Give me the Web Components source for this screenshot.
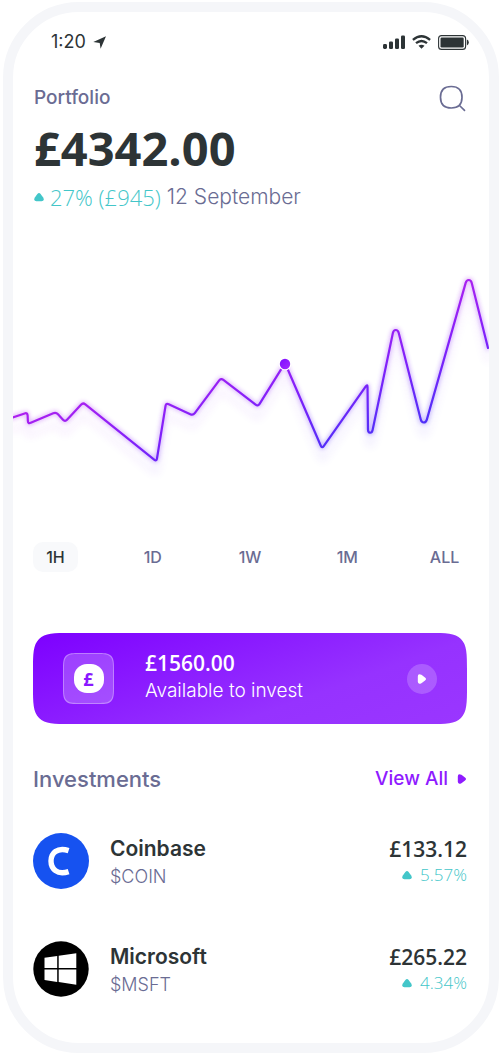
<!DOCTYPE html>
<html lang="en">
<head>
<meta charset="utf-8">
<meta name="viewport" content="width=device-width, initial-scale=1">
<title>Portfolio</title>
<style>
  :root {
    --ink: #2d3436;
    --muted: #6a6c93;
    --teal: #43c6c9;
    --violet: #8f1bff;
    --frame: #f5f6f9;
    --figures: "Open Sans", "Noto Sans", sans-serif;
  }
  body { margin: 0; background: #fff; color: var(--ink); font-family: Inter, "Open Sans", sans-serif; }
</style>
</head>
<body>
<portfolio-app></portfolio-app>

<script>
const base = `<style>
  *, *::before { box-sizing: border-box; }
  :host { display: block; }
  svg { display: block; flex: none; }
  button { font: inherit; color: inherit; border: 0; background: none; padding: 0; margin: 0; cursor: pointer; }
  a { color: inherit; text-decoration: none; }
</style>`;

function define(name, html, ready) {
  const template = document.createElement('template');
  template.innerHTML = base + html;
  customElements.define(name, class extends HTMLElement {
    constructor() {
      super();
      this.attachShadow({ mode: 'open' }).append(template.content.cloneNode(true));
    }
    connectedCallback() { if (ready) ready(this, this.shadowRoot); }
  });
}

/* Small triangle with rounded corners, pointing up or right */
define('trend-mark', `
<style>
  :host { display: inline-block; flex: none; }
  :host([right]) svg { transform: rotate(90deg); }
</style>
<svg width="10" height="10" viewBox="0 0 10 10" aria-hidden="true"><path d="M3.4 2Q5 0 6.6 2L9.2 5.6Q10.8 9.2 7.6 9.2H2.4Q-.8 9.2 .8 5.6Z" fill="currentColor"/></svg>`);

define('status-bar', `
<style>
  :host { display: flex; align-items: center; justify-content: space-between; height: 60px; padding: 0 20px 0 38px; }
  .side { display: flex; align-items: center; gap: 7px; font-size: 18px; line-height: 24px; }
</style>
<div class="side"><time>1:20</time>
  <svg width="13" height="13" viewBox="0 0 13 13" aria-hidden="true"><path d="M13 .3 7.6 12.7 6.7 7 .3 6Z" fill="currentColor"/></svg>
</div>
<div class="side">
  <svg width="22" height="14" viewBox="0 0 22 14" fill="currentColor" aria-hidden="true"><rect y="9" width="4" height="5" rx="1.4"/><rect x="6" y="6.5" width="4" height="7.5" rx="1.2"/><rect x="12" y="3.5" width="4" height="10.5" rx="1.2"/><rect x="18" y=".5" width="4" height="13.5" rx="1.2"/></svg>
  <svg width="19" height="14" viewBox="0 0 19 14" fill="none" stroke="currentColor" stroke-width="2.3" aria-hidden="true"><path d="M.9 4.8Q9.5-2.2 18.1 4.8M4 8.2Q9.5 3.7 15 8.2"/><path d="M6.5 10.8Q9.5 8.9 12.5 10.8L9.5 13.8Z" fill="currentColor" stroke="none"/></svg>
  <svg width="31" height="15" viewBox="0 0 31 15" aria-hidden="true"><rect x=".6" y=".6" width="27" height="13.8" rx="3" fill="none" stroke="currentColor" stroke-width="1.1"/><rect x="2.5" y="2.5" width="23.2" height="10" rx="1.2" fill="currentColor"/><path d="M28.9 4.6Q30.8 5.2 30.8 7.5T28.9 10.4Z" fill="currentColor"/></svg>
</div>`);

define('portfolio-summary', `
<style>
  :host { padding: 12px 23px 0 21px; }
  header { display: flex; align-items: center; justify-content: space-between; height: 28px; color: var(--muted); }
  h1 { margin: 0; font-size: 19px; line-height: 24px; font-weight: 500; }
  .total { margin: 8px 0 9px; font-family: var(--figures); font-size: 47px; line-height: 56px; font-weight: 700; }
  .change { display: flex; align-items: center; gap: 6px; margin: 0; font-size: 21px; line-height: 24px; font-weight: 300; color: var(--muted); white-space: nowrap; }
  .change span { color: var(--teal); font-family: var(--figures); font-size: 22px; }
  trend-mark { color: var(--teal); }
</style>
<header><h1>Portfolio</h1>
  <button aria-label="Search"><svg width="27" height="27" viewBox="0 0 27 27" fill="none" stroke="currentColor" stroke-width="1.7" stroke-linecap="round"><path d="M12.3 1.5C19.7 1.5 23 4.9 23 12.3S19.7 23 12.3 23 1.5 19.7 1.5 12.3 4.9 1.5 12.3 1.5ZM20.5 20.5 25.5 25.3"/></svg></button>
</header>
<p class="total">£4342.00</p>
<p class="change"><trend-mark></trend-mark><span>27% (£945)</span> 12 September</p>`);

define('price-chart', `
<style>
  svg { width: 100%; height: auto; }
</style>
<svg viewBox="0 0 476 260" role="img" aria-label="Portfolio value over the last hour">
  <defs>
    <linearGradient id="line" gradientUnits="userSpaceOnUse" x1="0" y1="177" x2="38" y2="301"><stop offset="0" stop-color="#ab20f0"/><stop offset=".45" stop-color="#8220fa"/><stop offset="1" stop-color="#4d30f8"/></linearGradient>
    <linearGradient id="dot" x1="0" y1="0" x2="1" y2="1"><stop offset="0" stop-color="#7c0cff"/><stop offset="1" stop-color="#a52cff"/></linearGradient>
    <filter id="glow" filterUnits="userSpaceOnUse" x="-20" y="0" width="516" height="260"><feGaussianBlur stdDeviation="2"/></filter>
    <filter id="shade" filterUnits="userSpaceOnUse" x="-20" y="0" width="516" height="280"><feGaussianBlur stdDeviation="4"/></filter>
  </defs>
  <g fill="none" stroke="url(#line)" stroke-linejoin="round" stroke-linecap="round">
    <path stroke-width="5" opacity=".07" transform="translate(0 12)" filter="url(#shade)"/>
    <path stroke-width="4" opacity=".34" filter="url(#glow)"/>
    <path stroke-width="2.2"/>
  </g>
  <circle cx="272" cy="124" r="6.5" fill="#fff"/>
  <circle cx="272" cy="124" r="5.2" fill="url(#dot)"/>
</svg>`, (host, root) => {
  const points = [[-2,178],[14.5,172.5],[15,184],[43,172],[52,182],[70,162.5],[143.5,221.5],[153,163],[180,175.5],[208,138],[245,166.5],[272,123],[309,208.5],[354.5,144],[355,192.5],[359,193],[380.5,90],[385,90],[408.5,182.5],[413,182.5],[453.5,40],[458,40],[475,108]];
  const toward = (a, b, d) => {
    const k = d / Math.hypot(b[0] - a[0], b[1] - a[1]);
    return [a[0] + (b[0] - a[0]) * Math.min(k, .5), a[1] + (b[1] - a[1]) * Math.min(k, .5)];
  };
  let d = 'M' + points[0];
  for (let i = 1; i < points.length - 1; i++) {
    d += 'L' + toward(points[i], points[i - 1], 3) + 'Q' + points[i] + ' ' + toward(points[i], points[i + 1], 3);
  }
  d += 'L' + points.at(-1);
  root.querySelectorAll('g path').forEach(p => p.setAttribute('d', d));
});

define('range-picker', `
<style>
  :host { display: flex; justify-content: space-between; padding: 42px 22px 0 20px; color: var(--muted); }
  button { width: 45px; height: 30px; border-radius: 10px; font-size: 16px; line-height: 20px; font-weight: 500; }
  button[aria-pressed=true] { background: #f8f9fb; color: var(--ink); }
</style>
<button aria-pressed="true">1H</button><button aria-pressed="false">1D</button><button aria-pressed="false">1W</button><button aria-pressed="false">1M</button><button aria-pressed="false">ALL</button>`,
(host, root) => root.addEventListener('click', e => {
  const hit = e.target.closest('button');
  if (hit) root.querySelectorAll('button').forEach(b => b.setAttribute('aria-pressed', b === hit));
}));

define('invest-card', `
<style>
  :host { margin: 61px 22px 0 20px; }
  section { display: flex; align-items: center; padding: 16px 30px; border-radius: 26px; color: #fff; background: linear-gradient(160deg, #7d00ff 0%, #9632ff 66%, #9a36ff 100%); }
  .tile { display: grid; place-items: center; width: 51px; height: 51px; border: 1px solid #ffffff50; border-radius: 13px; background: #ffffff38; }
  .coin { display: grid; place-items: center; width: 30px; height: 29px; border-radius: 13px; background: #fff; color: #8a18ff; font-family: var(--figures); font-size: 18px; line-height: 24px; font-weight: 700; }
  .text { flex: 1; margin-left: 31px; padding-bottom: 3px; }
  p { margin: 0; }
  .sum { font-family: var(--figures); font-size: 21px; line-height: 28px; font-weight: 600; }
  .note { font-size: 19px; line-height: 28px; font-weight: 300; }
  button { display: grid; place-items: center; width: 30px; height: 30px; border-radius: 50%; background: #ffffff33; }
  @supports (corner-shape: squircle) {
    section { border-radius: 38px; corner-shape: squircle; }
    .tile { border-radius: 18px; corner-shape: squircle; }
  }
</style>
<section>
  <div class="tile"><div class="coin">£</div></div>
  <div class="text"><p class="sum">£1560.00</p><p class="note">Available to invest</p></div>
  <button aria-label="Invest"><trend-mark right></trend-mark></button>
</section>`);

define('holding-row', `
<style>
  :host { display: flex; align-items: center; height: 56px; }
  ::slotted(svg) { display: block; flex: none; }
  p { margin: 0; }
  .name { flex: 1; margin-left: 21px; padding-top: 4px; }
  .value { text-align: right; font-family: var(--figures); padding-top: 4px; }
  .main { font-size: 21px; line-height: 28px; font-weight: 600; }
  .sub { font-size: 18px; line-height: 28px; font-weight: 300; color: var(--muted); }
  .rise { display: flex; align-items: center; justify-content: flex-end; gap: 8px; font-size: 17px; line-height: 24px; padding-bottom: 4px; font-weight: 300; color: var(--teal); }
</style>
<slot name="logo"></slot>
<div class="name"><p class="main"><slot name="name"></slot></p><p class="sub"><slot name="ticker"></slot></p></div>
<div class="value"><p class="main"><slot name="price"></slot></p><p class="rise"><trend-mark></trend-mark><slot name="rise"></slot></p></div>`);

define('investment-list', `
<style>
  :host { padding: 41px 22px 46px 20px; }
  header { display: flex; align-items: center; justify-content: space-between; height: 28px; margin-bottom: 40px; }
  h2 { margin: 0; font-size: 22px; line-height: 28px; font-weight: 500; color: var(--muted); }
  a { display: flex; align-items: center; gap: 9px; font-size: 19px; line-height: 24px; font-weight: 500; color: var(--violet); }
  .rows { display: flex; flex-direction: column; gap: 52px; }
</style>
<header><h2>Investments</h2><a href="#investments">View All<trend-mark right></trend-mark></a></header>
<div class="rows">
  <holding-row>
    <svg slot="logo" width="56" height="56" viewBox="0 0 56 56" aria-hidden="true"><circle cx="28" cy="28" r="28" fill="#1652f0"/><path d="M35.6 17.6C24 13.8 18 20.4 18 28.1S24 42.4 35.6 38.6" fill="none" stroke="#fff" stroke-width="5.4"/></svg>
    <span slot="name">Coinbase</span><span slot="ticker">$COIN</span><span slot="price">£133.12</span><span slot="rise">5.57%</span>
  </holding-row>
  <holding-row>
    <svg slot="logo" width="56" height="56" viewBox="0 0 56 56" aria-hidden="true"><circle cx="28" cy="28" r="27.7"/><path d="M11.5 16.8 24.2 15V27.1H11.5ZM25.7 14.8 43.3 12.3V27.1H25.7ZM11.5 28.6H24.2V40.9L11.5 39.1ZM25.7 28.6H43.3V43.8L25.7 41.1Z" fill="#fff"/></svg>
    <span slot="name">Microsoft</span><span slot="ticker">$MSFT</span><span slot="price">£265.22</span><span slot="rise">4.34%</span>
  </holding-row>
</div>`);

define('portfolio-app', `
<style>
  :host { padding: 2px 1px 2px 3px; }
  main { min-height: calc(100vh - 4px); border: 10px solid var(--frame); border-radius: 76px; overflow: hidden; background: #fff; }
  price-chart { margin-top: 31px; }
</style>
<main>
  <status-bar></status-bar>
  <portfolio-summary></portfolio-summary>
  <price-chart></price-chart>
  <range-picker></range-picker>
  <invest-card></invest-card>
  <investment-list></investment-list>
</main>`);
</script>
</body>
</html>
